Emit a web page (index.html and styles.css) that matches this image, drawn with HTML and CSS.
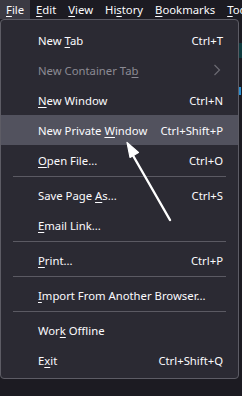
FILE: index.html
```html
<!DOCTYPE html>
<html lang="en">
<head>
    <meta charset="UTF-8">
    <title>File menu</title>
    <link rel="stylesheet" href="styles.css">
</head>
<body>
    <!-- Menu bar -->
    <div class="menubar">
        <span class="menubar-item open"><u>F</u>ile</span>
        <span class="menubar-item"><u>E</u>dit</span>
        <span class="menubar-item"><u>V</u>iew</span>
        <span class="menubar-item">Hi<u>s</u>tory</span>
        <span class="menubar-item"><u>B</u>ookmarks</span>
        <span class="menubar-item"><u>T</u>oo</span>
    </div>

    <div class="workspace">
        <!-- File menu popup -->
        <div class="menu">
            <div class="menu-item"><span>New <u>T</u>ab</span><span class="key">Ctrl+T</span></div>
            <div class="menu-item disabled"><span>New Container Ta<u>b</u></span>
                <svg class="chevron" width="8" height="12" viewBox="0 0 8 12"><path d="M1.5 1 L6.5 6 L1.5 11" fill="none" stroke="currentColor" stroke-width="1.2"/></svg>
            </div>
            <div class="menu-item"><span><u>N</u>ew Window</span><span class="key">Ctrl+N</span></div>
            <div class="menu-item active"><span>New Private <u>W</u>indow</span><span class="key">Ctrl+Shift+P</span></div>
            <div class="menu-item"><span><u>O</u>pen File...</span><span class="key">Ctrl+O</span></div>
            <div class="separator"></div>
            <div class="menu-item"><span>Save Page <u>A</u>s...</span><span class="key">Ctrl+S</span></div>
            <div class="menu-item"><span><u>E</u>mail Link...</span></div>
            <div class="separator"></div>
            <div class="menu-item"><span><u>P</u>rint...</span><span class="key">Ctrl+P</span></div>
            <div class="separator"></div>
            <div class="menu-item"><span><u>I</u>mport From Another Browser...</span></div>
            <div class="separator"></div>
            <div class="menu-item"><span>Wor<u>k</u> Offline</span></div>
            <div class="menu-item"><span>E<u>x</u>it</span><span class="key">Ctrl+Shift+Q</span></div>
        </div>

        <!-- bit of the page showing behind the menu -->
        <div class="page-edge">
            <div class="edge-tab"></div>
            <div class="edge-icon"></div>
        </div>

        <!-- annotation arrow drawn over the menu -->
        <svg class="pointer" width="60" height="90" viewBox="0 0 60 90">
            <path d="M14 12 L53 80" stroke="#fff" stroke-width="2.4" stroke-linecap="round"/>
            <path d="M10 2.5 L13 17.5 L21.5 12.5 Z" fill="#fff" stroke="#fff" stroke-width="1.2" stroke-linejoin="round"/>
        </svg>
    </div>
</body>
</html>
```

FILE: styles.css
```css
/* General */
body {
    margin: 0;
    background: #1c1b22;
    color: #fbfbfe;
    font-family: 'Noto Sans', 'Open Sans', sans-serif;
    font-size: 11.3px;
    overflow: hidden;
}

u {
    text-decoration-thickness: 1px;
    text-underline-offset: 2px;
}

/* Menu bar */
.menubar {
    display: flex;
    height: 19px;
    align-items: center;
    white-space: nowrap;
    overflow: hidden;
    background: #1c1b22;
}

.menubar-item {
    height: 19px;
    line-height: 19px;
    padding: 0 6px;
}

.menubar-item.open {
    background: #3b3a43;
}

/* Area under the menu bar */
.workspace {
    position: relative;
    display: flex;
}

/* Popup */
.menu {
    width: 237px;
    flex-shrink: 0;
    background: #2b2a33;
    border: 1px solid #5d5c65;
    border-radius: 4px;
    padding: 5px 0 3px;
}

.menu-item {
    display: flex;
    justify-content: space-between;
    align-items: center;
    height: 30px;
    padding: 0 15px 0 37px;
    white-space: nowrap;
}

.menu-item.active {
    background: #52525e;
}

.menu-item.disabled {
    color: #8b8a93;
}

.key {
    margin-left: 8px;
}

.chevron {
    color: #6c6b73;
    margin-right: 2px;
}

.separator {
    height: 1px;
    margin: 1px 12px 3px 12px;
    background: #5b5a63;
}

/* Page edge to the right */
.page-edge {
    flex-grow: 1;
    padding-top: 24px;
}

.edge-tab {
    height: 15px;
    background: #0f3b3f;
}

.edge-icon {
    height: 8px;
    margin-top: 29px;
    border-left: 2px solid #2a8fd1;
}

/* Arrow annotation */
.pointer {
    position: absolute;
    left: 117px;
    top: 121px;
}
```
